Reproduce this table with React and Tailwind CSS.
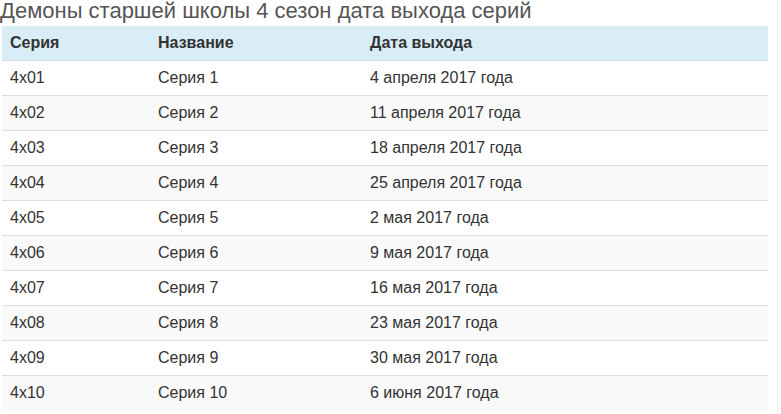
import React from 'react';

const months = ['апреля', 'апреля', 'апреля', 'апреля', 'мая', 'мая', 'мая', 'мая', 'мая', 'июня'];
const days = [4, 11, 18, 25, 2, 9, 16, 23, 30, 6];

const rows = days.map((d, i) => ({
  code: `4x${String(i + 1).padStart(2, '0')}`,
  name: `Серия ${i + 1}`,
  date: `${d} ${months[i]} 2017 года`,
}));

export default function App() {
  return (
    <div className="w-[781px] h-[414px] overflow-hidden bg-white">
      <div className="w-[778px] h-[414px] font-['Liberation_Sans',Arial,sans-serif] text-[#333] border-r border-[#ececec]">
        <h2 className="text-[22px] leading-[22px] text-[#555] h-[26px] whitespace-nowrap">
          Демоны старшей школы 4 сезон дата выхода серий
        </h2>
        <table className="ml-[2px] w-[766px] border-collapse text-[16px]">
          <thead>
            <tr className="bg-[#d9edf7] h-[34px] border-b border-[#cfe0ea]">
              <th className="w-[148px] px-2 text-left font-bold">Серия</th>
              <th className="w-[212px] px-2 text-left font-bold">Название</th>
              <th className="px-2 text-left font-bold">Дата выхода</th>
            </tr>
          </thead>
          <tbody>
            {rows.map((r, i) => (
              <tr
                key={r.code}
                className={`h-[35px] ${i > 0 ? 'border-t border-[#ddd]' : ''} ${i % 2 ? 'bg-[#f9f9f9]' : 'bg-white'}`}
              >
                <td className="px-2">{r.code}</td>
                <td className="px-2">{r.name}</td>
                <td className="px-2">{r.date}</td>
              </tr>
            ))}
          </tbody>
        </table>
      </div>
    </div>
  );
}
